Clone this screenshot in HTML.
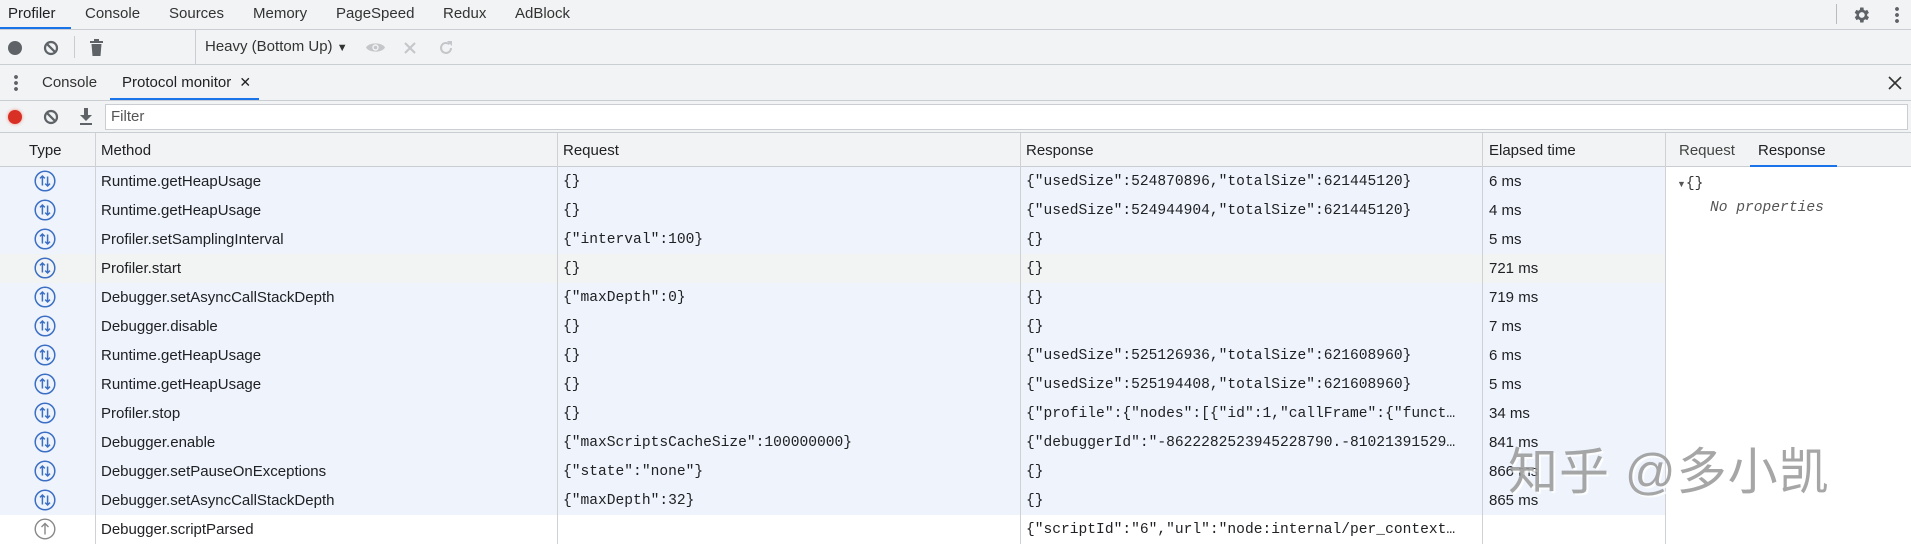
<!DOCTYPE html><html><head><style>
*{box-sizing:border-box;margin:0;padding:0}
body{width:1911px;height:544px;overflow:hidden;background:#fff;font-family:"Liberation Sans",Arial,sans-serif;font-size:15px;color:#202124;position:relative}
.abs{position:absolute}
.bar{position:absolute;left:0;width:1911px;background:#f1f3f4;border-bottom:1px solid #cacdd1}
.t{position:absolute;white-space:nowrap}
.mono{font-family:"Liberation Mono",monospace;font-size:14.6px}
.row{position:absolute;left:0;width:1665px;height:29px}
.row span{position:absolute;top:6px;white-space:nowrap}
.vl{position:absolute;top:133px;width:1px;height:411px;background:#cfd1d4}
</style></head><body>
<div class="bar" style="top:0;height:30px"></div>
<div class="t" style="left:8px;top:5px">Profiler</div>
<div class="abs" style="left:0;top:27px;width:71px;height:2px;background:#1a73e8"></div>
<div class="t" style="left:85px;top:5px;color:#333">Console</div>
<div class="t" style="left:169px;top:5px;color:#333">Sources</div>
<div class="t" style="left:253px;top:5px;color:#333">Memory</div>
<div class="t" style="left:336px;top:5px;color:#333">PageSpeed</div>
<div class="t" style="left:443px;top:5px;color:#333">Redux</div>
<div class="t" style="left:515px;top:5px;color:#333">AdBlock</div>
<div class="abs" style="left:1836px;top:4px;width:1px;height:20px;background:#bbb"></div>
<svg class="abs" style="left:1851px;top:5px" width="20" height="20" viewBox="0 0 24 24"><path fill="#5f6368" d="M19.4 13a7.5 7.5 0 000-2l2.1-1.6-2-3.5-2.5 1a7 7 0 00-1.7-1L15 3h-4l-.4 2.9a7 7 0 00-1.7 1l-2.5-1-2 3.5L6.6 11a7.5 7.5 0 000 2l-2.1 1.6 2 3.5 2.5-1a7 7 0 001.7 1L11 21h4l.4-2.9a7 7 0 001.7-1l2.5 1 2-3.5zM13 15.5a3.5 3.5 0 110-7 3.5 3.5 0 010 7z"/></svg>
<div class="abs" style="left:1895px;top:6px;width:4px;height:17px;background:radial-gradient(circle,#5f6368 1.8px,transparent 2px) 0 0/4px 6px"></div>

<div class="bar" style="top:30px;height:35px"></div>
<div class="abs" style="left:8px;top:41px;width:14px;height:14px;border-radius:50%;background:#5f6368"></div>
<svg class="abs" style="left:43px;top:40px" width="16" height="16" viewBox="0 0 16 16"><circle cx="8" cy="8" r="6" fill="none" stroke="#5f6368" stroke-width="2.2"/><path d="M3.8 3.8l8.4 8.4" stroke="#5f6368" stroke-width="2.2"/></svg>
<div class="abs" style="left:74px;top:36px;width:1px;height:22px;background:#ccc"></div>
<svg class="abs" style="left:90px;top:39px" width="13" height="17" viewBox="0 0 13 17"><rect x="0" y="2" width="13" height="2" fill="#5f6368"/><rect x="4" y="0" width="5" height="2" fill="#5f6368"/><path d="M1.5 5h10l-1 12h-8z" fill="#5f6368"/></svg>
<div class="abs" style="left:195px;top:30px;width:1px;height:35px;background:#cacdd1"></div>
<div class="t" style="left:205px;top:38px;color:#333">Heavy (Bottom Up) <span style="font-size:11px">▼</span></div>
<svg class="abs" style="left:365px;top:40px" width="21" height="15" viewBox="0 0 21 15"><path d="M1 7.5C4 2 17 2 20 7.5 17 13 4 13 1 7.5z" fill="#c4c6c9"/><circle cx="10.5" cy="7.5" r="3.2" fill="#f1f3f4"/><circle cx="10.5" cy="7.5" r="1.8" fill="#c4c6c9"/></svg>
<svg class="abs" style="left:403px;top:41px" width="14" height="14"><path d="M2 2l10 10M12 2L2 12" stroke="#c4c6c9" stroke-width="2"/></svg>
<svg class="abs" style="left:438px;top:40px" width="16" height="16" viewBox="0 0 16 16"><path d="M13 8a5 5 0 11-1.6-3.7" fill="none" stroke="#c4c6c9" stroke-width="2"/><path d="M9 1h5v5z" fill="#c4c6c9"/></svg>

<div class="bar" style="top:65px;height:36px"></div>
<div class="abs" style="left:14px;top:74px;width:4px;height:17px;background:radial-gradient(circle,#5f6368 1.8px,transparent 2px) 0 0/4px 6px"></div>
<div class="t" style="left:42px;top:74px;color:#333">Console</div>
<div class="t" style="left:122px;top:74px">Protocol monitor <span style="font-size:14px;margin-left:4px">✕</span></div>
<div class="abs" style="left:110px;top:98px;width:149px;height:2px;background:#1a73e8"></div>
<svg class="abs" style="left:1888px;top:76px" width="14" height="14"><path d="M1 1l12 12M13 1L1 13" stroke="#333" stroke-width="1.6"/></svg>

<div class="abs" style="left:0;top:101px;width:1911px;height:32px;background:#f1f3f4;border-bottom:1px solid #cacdd1"></div>
<div class="abs" style="left:8px;top:110px;width:14px;height:14px;border-radius:50%;background:#d93025;box-shadow:0 0 3px #f28b82"></div>
<svg class="abs" style="left:43px;top:109px" width="16" height="16" viewBox="0 0 16 16"><circle cx="8" cy="8" r="6" fill="none" stroke="#5f6368" stroke-width="2.2"/><path d="M3.8 3.8l8.4 8.4" stroke="#5f6368" stroke-width="2.2"/></svg>
<svg class="abs" style="left:79px;top:108px" width="14" height="18" viewBox="0 0 14 18"><path d="M5 0h4v7h4l-6 6-6-6h4z" fill="#5f6368"/><rect x="1" y="15" width="12" height="2" fill="#5f6368"/></svg>
<div class="abs" style="left:105px;top:104px;width:1803px;height:26px;background:#fff;border:1px solid #cacdd1"></div>
<div class="t" style="left:111px;top:108px;color:#555">Filter</div>

<div class="abs" style="left:0;top:133px;width:1911px;height:34px;background:#f1f3f4;border-bottom:1px solid #cacdd1"></div>
<div class="abs" style="left:1665px;top:167px;width:246px;height:377px;background:#fff"></div>
<div class="t" style="left:29px;top:142px">Type</div>
<div class="t" style="left:101px;top:142px">Method</div>
<div class="t" style="left:563px;top:142px">Request</div>
<div class="t" style="left:1026px;top:142px">Response</div>
<div class="t" style="left:1489px;top:142px">Elapsed time</div>
<div class="t" style="left:1679px;top:142px;color:#444">Request</div>
<div class="t" style="left:1758px;top:142px">Response</div>
<div class="abs" style="left:1750px;top:165px;width:87px;height:2px;background:#1a73e8"></div>
<div class="t" style="left:1677px;top:174px;font-size:14px;color:#333"><span style="font-size:9px;color:#555">▼</span><span class="mono">{}</span></div>
<div class="t mono" style="left:1710px;top:200px;font-style:italic;color:#555">No properties</div>

<div id="rows"></div>
<div class="vl" style="left:95px"></div>
<div class="vl" style="left:557px"></div>
<div class="vl" style="left:1020px"></div>
<div class="vl" style="left:1482px"></div>
<div class="vl" style="left:1665px"></div>
<div class="t" style="left:1508px;top:432px;font-family:'Liberation Sans','Noto Sans CJK SC',sans-serif;font-size:50px;color:rgba(150,150,150,.85);text-shadow:2px 2px 0 rgba(255,255,255,.8);letter-spacing:1px">知乎 @多小凯</div>
<script>
var d=[["Runtime.getHeapUsage","{}",'{"usedSize":524870896,"totalSize":621445120}',"6 ms"],
["Runtime.getHeapUsage","{}",'{"usedSize":524944904,"totalSize":621445120}',"4 ms"],
["Profiler.setSamplingInterval",'{"interval":100}',"{}","5 ms"],
["Profiler.start","{}","{}","721 ms"],
["Debugger.setAsyncCallStackDepth",'{"maxDepth":0}',"{}","719 ms"],
["Debugger.disable","{}","{}","7 ms"],
["Runtime.getHeapUsage","{}",'{"usedSize":525126936,"totalSize":621608960}',"6 ms"],
["Runtime.getHeapUsage","{}",'{"usedSize":525194408,"totalSize":621608960}',"5 ms"],
["Profiler.stop","{}",'{"profile":{"nodes":[{"id":1,"callFrame":{"funct…',"34 ms"],
["Debugger.enable",'{"maxScriptsCacheSize":100000000}','{"debuggerId":"-8622282523945228790.-81021391529…',"841 ms"],
["Debugger.setPauseOnExceptions",'{"state":"none"}',"{}","866 ms"],
["Debugger.setAsyncCallStackDepth",'{"maxDepth":32}',"{}","865 ms"],
["Debugger.scriptParsed","",'{"scriptId":"6","url":"node:internal/per_context…',""]];
var h="";d.forEach(function(r,i){var bg=i==12?"#fff":(i==3?"#f2f3f3":"#eef3fc");var last=i==12;
var ic=last?'<svg style="position:absolute;left:34px;top:3px" width="22" height="22" viewBox="0 0 22 22"><circle cx="11" cy="11" r="9.8" fill="none" stroke="#888" stroke-width="1.4"/><path d="M11 16.5V5.5M7.5 9l3.5-3.5 3.5 3.5" fill="none" stroke="#888" stroke-width="1.4"/></svg>':'<svg style="position:absolute;left:34px;top:3px" width="22" height="22" viewBox="0 0 22 22"><circle cx="11" cy="11" r="9.8" fill="none" stroke="#3b6fc4" stroke-width="1.5"/><path d="M8.4 15.5V6M6 8.4l2.4-2.4 2.4 2.4M13.6 6.5V16M11.2 13.6l2.4 2.4 2.4-2.4" fill="none" stroke="#3b6fc4" stroke-width="1.5"/></svg>';
h+='<div class="row" style="top:'+(167+i*29)+'px;background:'+bg+'">'+ic+'<span style="left:101px">'+r[0]+'</span><span class="mono" style="left:563px;top:7px">'+r[1]+'</span><span class="mono" style="left:1026px;top:7px">'+r[2]+'</span><span style="left:1489px">'+r[3]+'</span></div>';});
document.getElementById("rows").outerHTML=h;
</script>
</body></html>
